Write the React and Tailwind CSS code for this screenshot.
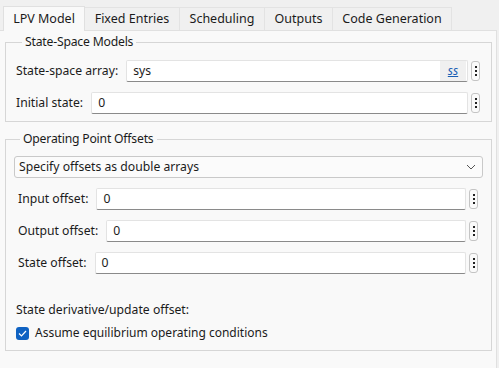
import React from "react";

function Kebab() {
  return (
    <div className="w-[9px] h-[20px] rounded-[3px] border border-[#c4c4c4] bg-[#fafafa] flex flex-col items-center justify-center gap-[2px] shrink-0">
      <span className="w-[2px] h-[2px] bg-[#222]" />
      <span className="w-[2px] h-[2px] bg-[#222]" />
      <span className="w-[2px] h-[2px] bg-[#222]" />
    </div>
  );
}

function TextInput({ value, children }) {
  return (
    <div className="flex-1 h-[22px] bg-white border border-[#e3e3e3] border-b-[#8a8a8a] rounded-[2px] flex items-center pl-[6px] pr-[1px] text-[#1b1b1b]">
      <span className="flex-1">{value}</span>
      {children}
    </div>
  );
}

function Row({ label, value, children, className = "" }) {
  return (
    <div className={"flex items-center " + className}>
      <span className="mr-[8px] whitespace-nowrap">{label}</span>
      <TextInput value={value}>{children}</TextInput>
      <div className="ml-[3px]">
        <Kebab />
      </div>
    </div>
  );
}

function Tab({ label, active, w }) {
  return active ? (
    <div className={"h-[25px] flex items-center justify-center bg-[#f9f9f9] border border-b-0 border-[#e0e0e0] -mb-px relative z-10 " + w}>
      {label}
    </div>
  ) : (
    <div className={"h-[23px] flex items-center justify-center bg-[#f0f0f0] border border-b-0 border-l-0 border-[#e3e3e3] " + w}>
      {label}
    </div>
  );
}

export default function App() {
  return (
    <div
      className="w-[499px] h-[368px] bg-[#f0f0f0] text-[12.2px] text-[#1b1b1b] overflow-hidden"
      style={{ fontFamily: '"Noto Sans", "Open Sans", sans-serif' }}
    >
      <div className="flex items-end pl-[3px] pt-[5px] h-[30px] text-[12.5px]">
        <Tab label="LPV Model" active w="w-[82px]" />
        <Tab label="Fixed Entries" w="w-[95px]" />
        <Tab label="Scheduling" w="w-[85px]" />
        <Tab label="Outputs" w="w-[68px]" />
        <Tab label="Code Generation" w="w-[119px]" />
      </div>
      <div className="w-[497px] h-[338px] bg-[#f9f9f9] border-t border-r border-[#e0e0e0] pl-[5px] pr-[4px] pt-[3px]">
        <fieldset className="border border-[#d6d6d6] pl-[10px] pr-[11px] pb-[7px]">
          <legend className="ml-[6px] px-[3px] leading-[16px] text-[12.2px] tracking-[-0.2px]">State-Space Models</legend>
          <Row label="State-space array:" value="sys" className="mt-[10px]">
            <span className="w-[26px] h-[20px] bg-[#f0f0f0] flex items-center justify-center italic underline text-[#1a5fb4] text-[12px]">
              ss
            </span>
          </Row>
          <Row label="Initial state:" value="0" className="mt-[10px]" />
        </fieldset>
        <fieldset className="border border-[#d6d6d6] mt-[9px] pl-[8px] pr-[8px] h-[220px]">
          <legend className="ml-[6px] px-[3px] leading-[16px] tracking-[-0.2px]">Operating Point Offsets</legend>
          <div className="mt-[9px] h-[22px] border border-[#c9c9c9] rounded-[3px] bg-[#fbfbfb] flex items-center pl-[4px] pr-[6px]">
            <span className="flex-1">Specify offsets as double arrays</span>
            <svg width="10" height="6" viewBox="0 0 10 6">
              <path d="M1 1 L5 5 L9 1" fill="none" stroke="#555" strokeWidth="1" />
            </svg>
          </div>
          <div className="pl-[4px] pr-[5px]">
            <Row label="Input offset:" value="0" className="mt-[10px]" />
            <Row label="Output offset:" value="0" className="mt-[10px]" />
            <Row label="State offset:" value="0" className="mt-[10px]" />
          </div>
          <div className="mt-[27px] pl-[2px]">State derivative/update offset:</div>
          <div className="mt-[5px] pl-[2px] flex items-center text-[12px]">
            <span className="w-[13px] h-[13px] rounded-[3px] bg-[#0f62c2] flex items-center justify-center mr-[6px]">
              <svg width="9" height="7" viewBox="0 0 9 7">
                <path d="M1 3.5 L3.5 6 L8 1" fill="none" stroke="white" strokeWidth="1.2" />
              </svg>
            </span>
            Assume equilibrium operating conditions
          </div>
        </fieldset>
      </div>
    </div>
  );
}
